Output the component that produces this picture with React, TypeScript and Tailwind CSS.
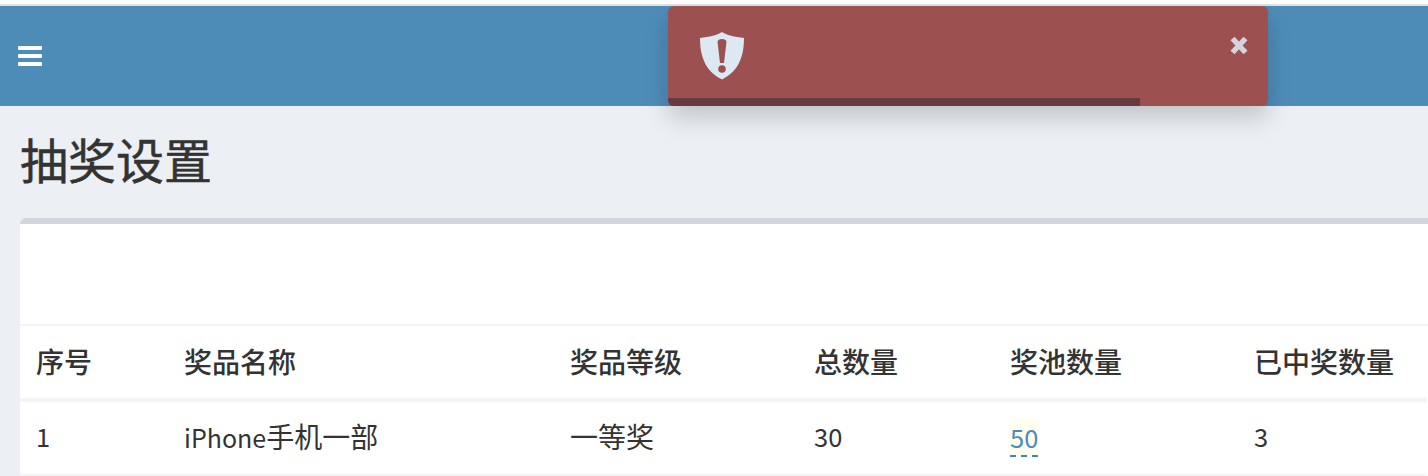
const headers = ["序号", "奖品名称", "奖品等级", "总数量", "奖池数量", "已中奖数量"];
const widths = ["w-[147px] pl-4", "w-[386px] pl-[17px]", "w-[244px] pl-[17px]", "w-[196px] pl-[17px]", "w-[244px] pl-[17px]", "w-[190px] pl-[17px]"];

const App = () => {
  return (
    <div className="relative h-[476px] w-[1428px] overflow-hidden bg-[#ecf0f5] font-['Noto_Sans_CJK_SC','Noto_Sans',sans-serif] text-[#333]">
      <div className="h-1 bg-white"></div>
      <div className="h-0.5 bg-[#e2e2e2]"></div>

      <header className="flex h-[100px] items-center bg-[#4e8cb8] pl-[18px]">
        <div className="mb-px flex w-6 flex-col gap-1">
          <span className="h-1 rounded-[1px] bg-white"></span>
          <span className="h-1 rounded-[1px] bg-white"></span>
          <span className="h-1 rounded-[1px] bg-white"></span>
        </div>
      </header>

      <div className="pt-[18px] pl-5">
        <h1 className="h-[94px] text-[48px] leading-[68px] font-normal [-webkit-text-stroke:0.5px_#333]">抽奖设置</h1>

        <div className="rounded-tl-md border-t-[6px] border-[#d2d6de] bg-white">
          <div className="h-[102px] border-b-2 border-[#f4f4f4]"></div>
          <table className="table-fixed border-separate border-spacing-0 text-[28px]">
            <thead>
              <tr>
                {headers.map((h, i) => (
                  <th key={h} className={`${widths[i]} h-[76px] border-b-4 border-[#f4f4f4] pb-0.5 text-left font-medium whitespace-nowrap`}>
                    {h}
                  </th>
                ))}
              </tr>
            </thead>
            <tbody>
              <tr>
                <td className="h-[74px] border-b-2 border-[#f4f4f4] pb-1 pl-4 text-[25.5px]">1</td>
                <td className="h-[74px] border-b-2 border-[#f4f4f4] pb-1 pl-[17px] whitespace-nowrap">
                  <span className="text-[25px]">iPhone</span>手机一部
                </td>
                <td className="h-[74px] border-b-2 border-[#f4f4f4] pb-1 pl-[17px]">一等奖</td>
                <td className="h-[74px] border-b-2 border-[#f4f4f4] pb-1 pl-[17px] text-[25.5px]">30</td>
                <td className="h-[74px] border-b-2 border-[#f4f4f4] pl-[17px]">
                  <a className="mb-1 inline-flex w-7 flex-col bg-[#fffff0] text-[25.5px] leading-[36px] text-[#4e8cb8]">
                    50
                    <span className="flex justify-between bg-white">
                      <span className="h-0.5 w-1.5 bg-[#3a87c8]"></span>
                      <span className="h-0.5 w-1.5 bg-[#3a87c8]"></span>
                      <span className="h-0.5 w-1.5 bg-[#3a87c8]"></span>
                    </span>
                  </a>
                </td>
                <td className="h-[74px] border-b-2 border-[#f4f4f4] pb-1 pl-[17px] text-[25.5px]">3</td>
              </tr>
            </tbody>
          </table>
        </div>
      </div>

      {/* toast */}
      <div className="absolute top-[6px] left-[668px] flex h-[100px] w-[600px] justify-between overflow-hidden rounded-md bg-[#9c5050] shadow-[0_12px_24px_rgba(0,0,0,0.18)]">
        <svg className="mt-[26px] ml-[32px] h-12 w-[44px] blur-[0.6px]" viewBox="0 0 44 48">
          <path
            fill="#dce8f2"
            d="M22 0 C26 3 35 5 44 6 C44 24 39 39 22 47.5 C5 39 0 24 0 6 C9 5 18 3 22 0 Z"
          />
          <path fill="#9c5050" d="M17.5 10 C17.5 6 26.5 6 26.5 10 L24 31 h-4 Z" />
          <circle cx="22" cy="37" r="3.8" fill="#9c5050" />
        </svg>
        <svg className="mt-[30px] mr-5 h-[19px] w-[18px]" viewBox="0 0 18 19">
          <path stroke="#d4d4dc" strokeWidth="5.5" d="M2.5 2.5 L15.5 16.5 M15.5 2.5 L2.5 16.5" />
        </svg>
        <div className="absolute bottom-0 left-0 h-2 w-[472px] bg-[#663a3e]"></div>
      </div>
    </div>
  );
};

export default App;
